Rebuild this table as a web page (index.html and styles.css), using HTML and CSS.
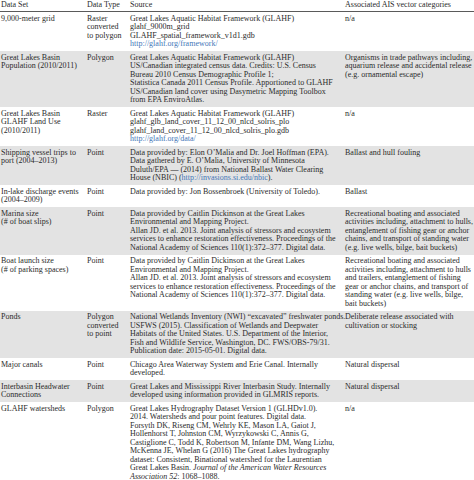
FILE: index.html
```html
<!DOCTYPE html>
<html>
<head>
<meta charset="utf-8">
<link rel="stylesheet" href="styles.css">
</head>
<body>
<table class="data">
<colgroup>
<col class="c-set"><col class="c-type"><col class="c-src"><col class="c-cat">
</colgroup>
<thead>
<tr><th>Data Set</th><th>Data Type</th><th>Source</th><th>Associated AIS vector categories</th></tr>
</thead>
<tbody>
<tr>
<td>9,000-meter grid</td>
<td>Raster<br>converted<br>to polygon</td>
<td>Great Lakes Aquatic Habitat Framework (GLAHF)<br>glahf_9000m_grid<br>GLAHF_spatial_framework_v1d1.gdb<br><span class="link">http://glahf.org/framework/</span></td>
<td>n/a</td>
</tr>
<tr class="alt">
<td>Great Lakes Basin<br>Population (2010/2011)</td>
<td>Polygon</td>
<td>Great Lakes Aquatic Habitat Framework (GLAHF)<br>US/Canadian integrated census data. Credits: U.S. Census<br>Bureau 2010 Census Demographic Profile 1;<br>Statistica Canada 2011 Census Profile. Apportioned to GLAHF<br>US/Canadian land cover using Dasymetric Mapping Toolbox<br>from EPA EnviroAtlas.</td>
<td>Organisms in trade pathways including,<br>aquarium release and accidental release<br>(e.g. ornamental escape)</td>
</tr>
<tr>
<td>Great Lakes Basin<br>GLAHF Land Use<br>(2010/2011)</td>
<td>Raster</td>
<td>Great Lakes Aquatic Habitat Framework (GLAHF)<br>glahf_glb_land_cover_11_12_00_nlcd_solris_plo<br>glahf_land_cover_11_12_00_nlcd_solris_plo.gdb<br><span class="link">http://glahf.org/data/</span></td>
<td>n/a</td>
</tr>
<tr class="alt">
<td>Shipping vessel trips to<br>port (2004–2013)</td>
<td>Point</td>
<td>Data provided by: Elon O’Malia and Dr. Joel Hoffman (EPA).<br>Data gathered by E. O’Malia, University of Minnesota<br>Duluth/EPA — (2014) from National Ballast Water Clearing<br>House (NBIC) (<span class="link">http://invasions.si.edu/nbic</span>).</td>
<td>Ballast and hull fouling</td>
</tr>
<tr>
<td>In-lake discharge events<br>(2004–2009)</td>
<td>Point</td>
<td>Data provided by: Jon Bossenbroek (University of Toledo).</td>
<td>Ballast</td>
</tr>
<tr class="alt">
<td>Marina size<br>(# of boat slips)</td>
<td>Point</td>
<td>Data provided by Caitlin Dickinson at the Great Lakes<br>Environmental and Mapping Project.<br>Allan JD. et al. 2013. Joint analysis of stressors and ecosystem<br>services to enhance restoration effectiveness. Proceedings of the<br>National Academy of Sciences 110(1):372–377. Digital data.</td>
<td>Recreational boating and associated<br>activities including, attachment to hulls,<br>entanglement of fishing gear or anchor<br>chains, and transport of standing water<br>(e.g. live wells, bilge, bait buckets)</td>
</tr>
<tr>
<td>Boat launch size<br>(# of parking spaces)</td>
<td>Point</td>
<td>Data provided by Caitlin Dickinson at the Great Lakes<br>Environmental and Mapping Project.<br>Allan JD. et al. 2013. Joint analysis of stressors and ecosystem<br>services to enhance restoration effectiveness. Proceedings of the<br>National Academy of Sciences 110(1):372–377. Digital data.</td>
<td>Recreational boating and associated<br>activities including, attachment to hulls<br>and trailers, entanglement of fishing<br>gear or anchor chains, and transport of<br>standing water (e.g. live wells, bilge,<br>bait buckets)</td>
</tr>
<tr class="alt">
<td>Ponds</td>
<td>Polygon<br>converted<br>to point</td>
<td>National Wetlands Inventory (NWI) “excavated” freshwater ponds.<br>USFWS (2015). Classification of Wetlands and Deepwater<br>Habitats of the United States. U.S. Department of the Interior,<br>Fish and Wildlife Service, Washington, DC. FWS/OBS-79/31.<br>Publication date: 2015-05-01. Digital data.</td>
<td>Deliberate release associated with<br>cultivation or stocking</td>
</tr>
<tr>
<td>Major canals</td>
<td>Point</td>
<td>Chicago Area Waterway System and Erie Canal. Internally<br>developed.</td>
<td>Natural dispersal</td>
</tr>
<tr class="alt">
<td>Interbasin Headwater<br>Connections</td>
<td>Point</td>
<td>Great Lakes and Mississippi River Interbasin Study. Internally<br>developed using information provided in GLMRIS reports.</td>
<td>Natural dispersal</td>
</tr>
<tr>
<td>GLAHF watersheds</td>
<td>Polygon</td>
<td>Great Lakes Hydrography Dataset Version 1 (GLHDv1.0).<br>2014. Watersheds and pour point features. Digital data.<br>Forsyth DK, Riseng CM, Wehrly KE, Mason LA, Gaiot J,<br>Hollenhorst T, Johnston CM, Wyrzykowski C, Annis G,<br>Castiglione C, Todd K, Robertson M, Infante DM, Wang Lizhu,<br>McKenna JE, Whelan G (2016) The Great Lakes hydrography<br>dataset: Consistent, Binational watershed for the Laurentian<br>Great Lakes Basin. <i>Journal of the American Water Resources<br>Association 52</i>: 1068–1088.</td>
<td>n/a</td>
</tr>
</tbody>
</table>
</body>
</html>
```

FILE: styles.css
```css
html, body {
  margin: 0;
  padding: 0;
  background: #ffffff;
}
body {
  width: 474px;
  height: 480px;
  overflow: hidden;
  font-family: "Liberation Serif", "Times New Roman", serif;
  font-size: 8px;
  line-height: 8.5px;
  color: #2b2b2b;
}
.data {
  width: 474px;
  border-collapse: collapse;
  table-layout: fixed;
}
.c-set { width: 86px; }
.c-type { width: 43px; }
.c-src { width: 215px; }
.c-cat { width: 130px; }
.data th,
.data td {
  text-align: left;
  vertical-align: top;
  white-space: nowrap;
  font-weight: normal;
  padding: 2.5px 0 2.5px 1px;
}
.data th {
  padding-top: 1px;
  padding-bottom: 1.5px;
  border-bottom: 1px solid #5a5a5a;
}
.data tr.alt td {
  background: #e3e3e3;
}
.link {
  color: #4477b8;
}
```
